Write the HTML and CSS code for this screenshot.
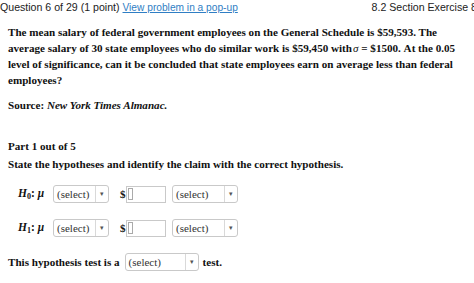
FILE: index.html
```html
<!DOCTYPE html>
<html>
<head>
<meta charset="utf-8">
<link rel="stylesheet" href="styles.css">
</head>
<body>
<div class="topbar">
  <div class="qinfo">Question 6 of 29 (1 point) <a class="link" href="#">View problem in a pop-up</a></div>
  <div class="section">8.2 Section Exercise 8</div>
</div>
<div class="content">
  <p class="problem">The mean salary of federal government employees on the General Schedule is $59,593. The average salary of 30 state employees who do similar work is $59,450 with<i class="sigma">σ</i> = $1500. At the 0.05 level of significance, can it be concluded that state employees earn on average less than federal employees?</p>
  <p class="source">Source: <i>New York Times Almanac.</i></p>
  <p class="part">Part 1 out of 5</p>
  <p class="instr">State the hypotheses and identify the claim with the correct hypothesis.</p>

  <div class="hrow">
    <span class="hlabel"><i>H</i><sub>0</sub>: <i>μ</i></span>
    <span class="sel sel-a"><span class="seltext">(select)</span><span class="arrow">▾</span></span>
    <span class="dollar">$</span>
    <span class="inp"><span class="caret"></span></span>
    <span class="sel sel-b"><span class="seltext">(select)</span><span class="arrow">▾</span></span>
  </div>
  <div class="hrow">
    <span class="hlabel"><i>H</i><sub>1</sub>: <i>μ</i></span>
    <span class="sel sel-a"><span class="seltext">(select)</span><span class="arrow">▾</span></span>
    <span class="dollar">$</span>
    <span class="inp"><span class="caret"></span></span>
    <span class="sel sel-b"><span class="seltext">(select)</span><span class="arrow">▾</span></span>
  </div>
  <div class="trow">
    <span class="ttext">This hypothesis test is a</span>
    <span class="sel sel-c"><span class="seltext">(select)</span><span class="arrow">▾</span></span>
    <span class="ttext">test.</span>
  </div>
</div>
</body>
</html>
```
FILE: styles.css
```css
html, body {
  margin: 0;
  padding: 0;
  background: #ffffff;
  overflow: hidden;
}
body {
  width: 474px;
  height: 283px;
  color: #111;
}
.topbar {
  display: flex;
  height: 14px;
  font-family: "Liberation Sans", Arial, sans-serif;
  font-size: 10.6px;
  line-height: 14px;
  white-space: nowrap;
  overflow: hidden;
}
.qinfo { color: #222; flex: none; }
.link { color: #2f7ec4; text-decoration: underline; font-size: 10.2px; }
.section { color: #222; flex: none; margin-left: auto; margin-right: -3px; }
.content {
  padding: 0 12px 0 8px;
  font-family: "Liberation Serif", "Times New Roman", serif;
  font-size: 11.1px;
  font-weight: bold;
  color: #111;
}
p { margin: 0; }
.problem {
  margin-top: 10px;
  line-height: 16px;
}
.sigma { font-weight: normal; margin-left: 1px; }
.source {
  margin-top: 9px;
  line-height: 16px;
}
.part {
  margin-top: 24px;
  line-height: 18px;
}
.instr { line-height: 18px; }
.hrow {
  display: flex;
  align-items: center;
  height: 18px;
  margin-top: 12px;
  padding-left: 10px;
}
.hrow + .hrow { margin-top: 16px; }
.hlabel {
  flex: none;
  width: 35px;
  font-size: 11.5px;
}
.hlabel sub { font-size: 8px; vertical-align: -2px; }
.sel {
  flex: none;
  display: flex;
  align-items: stretch;
  box-sizing: border-box;
  height: 18px;
  border: 1px solid #c9c9c9;
  border-radius: 3px;
  background: #fff;
  font-weight: normal;
  font-size: 11px;
  color: #333;
}
.seltext {
  flex: 1;
  padding-left: 3px;
  line-height: 16px;
}
.arrow {
  width: 12px;
  border-left: 1px solid #d9d9d9;
  font-size: 7px;
  text-align: center;
  line-height: 16px;
  color: #555;
}
.sel-a { width: 56px; }
.sel-b { width: 66px; margin-left: 6px; }
.sel-c { width: 74px; margin: 0 4px 0 5px; }
.dollar { flex: none; margin-left: 11px; width: 6px; }
.inp {
  flex: none;
  box-sizing: border-box;
  width: 40px;
  height: 17px;
  border: 1px solid #c9c9c9;
  display: flex;
  align-items: center;
  padding-left: 1px;
}
.caret {
  width: 5px;
  height: 12px;
  border: 1px solid #aaa;
  box-sizing: border-box;
}
.trow {
  display: flex;
  align-items: center;
  height: 18px;
  margin-top: 16px;
}
```
